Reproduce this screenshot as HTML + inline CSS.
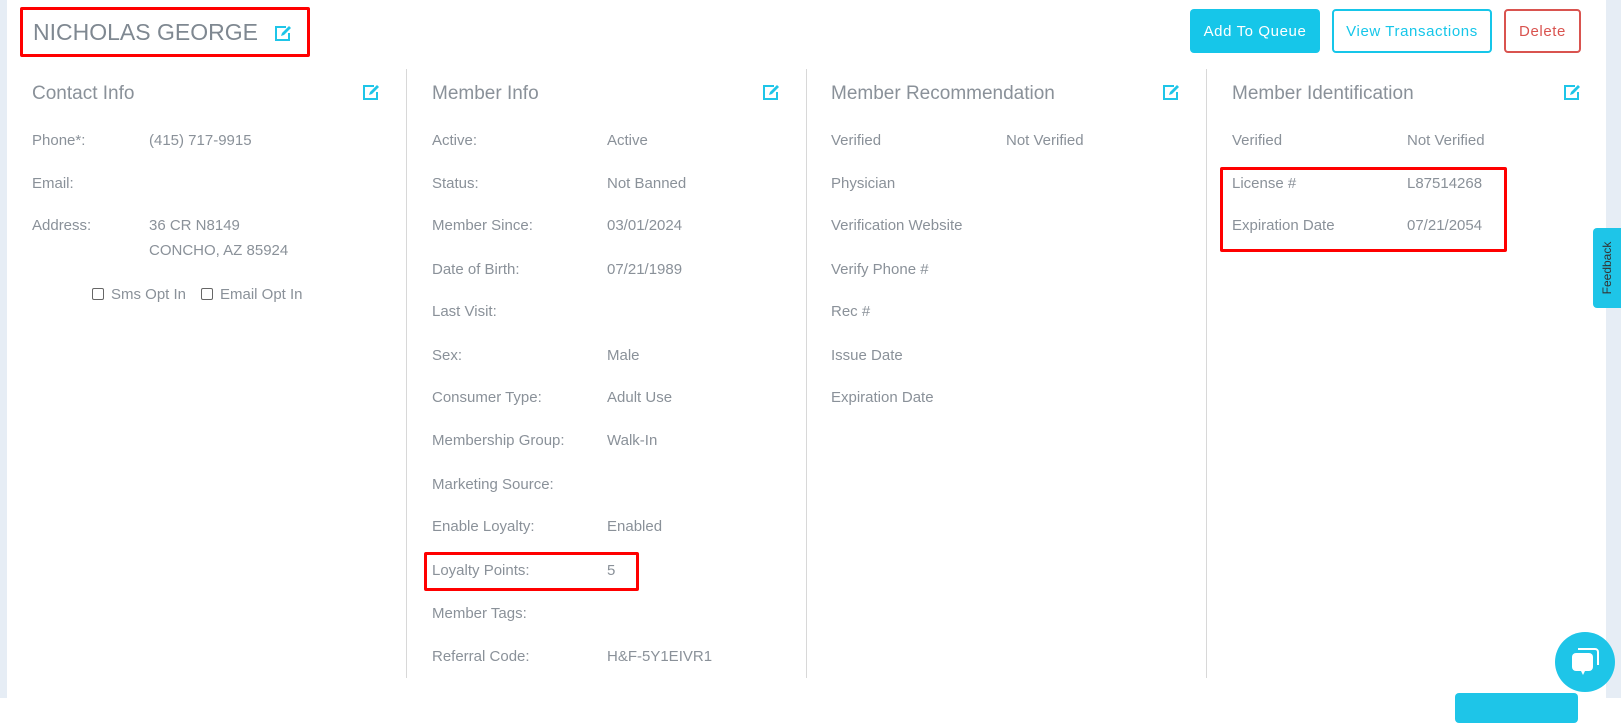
<!DOCTYPE html>
<html><head><meta charset="utf-8"><style>
*{margin:0;padding:0;box-sizing:border-box}
body{width:1621px;height:698px;overflow:hidden;background:#fff;font-family:"Liberation Sans",sans-serif;color:#8a9199;position:relative}
.abs{position:absolute}
.lstrip{left:0;top:0;width:7px;height:698px;background:#e6edf5}
.rstrip{left:1606px;top:0;width:15px;height:698px;background:#e6edf5}
.t{position:absolute;font-size:15px;white-space:nowrap;line-height:18px}
.h{position:absolute;font-size:19px;color:#8a9199;line-height:22px}
.div{position:absolute;top:69px;width:1px;height:609px;background:#d8d8d8}
.red{position:absolute;border:3px solid #f00;border-radius:2px}
.btn{position:absolute;top:9px;height:44px;border-radius:4px;font-size:15px;display:flex;align-items:center;justify-content:center;letter-spacing:.6px}
.cb{display:inline-block;width:12px;height:12px;border:1px solid #666;border-radius:2px;vertical-align:-1px;margin-right:7px}
</style></head><body>
<div class="abs lstrip"></div><div class="abs rstrip"></div>
<div class="red" style="left:20px;top:7px;width:290px;height:50px"></div>
<div class="abs" style="left:33px;top:18px;font-size:23px;line-height:28px;color:#7f8891">NICHOLAS GEORGE</div>
<svg class="abs" style="left:274px;top:25px" width="19" height="17" viewBox="0 0 19 17"><path d="M12 2H2v13h13V8" fill="none" stroke="#1ec5e8" stroke-width="2"/><path d="M7 11l1-3 7-7 2 2-7 7z" fill="#1ec5e8"/></svg>
<div class="btn" style="left:1190px;width:130px;background:#16c6e9;color:#fff">Add To Queue</div>
<div class="btn" style="left:1332px;width:160px;border:2px solid #16c6e9;color:#16c6e9">View Transactions</div>
<div class="btn" style="left:1504px;width:77px;border:2px solid #d9534f;color:#d9534f">Delete</div>

<div class="div" style="left:406px"></div><div class="div" style="left:806px"></div><div class="div" style="left:1206px"></div>

<div class="h" style="left:32px;top:83px">Contact Info</div>
<div class="h" style="left:432px;top:83px">Member Info</div>
<div class="h" style="left:831px;top:83px">Member Recommendation</div>
<div class="h" style="left:1232px;top:83px">Member Identification</div>
<svg class="abs" style="left:362px;top:84px" width="19" height="17" viewBox="0 0 19 17"><path d="M12 2H2v13h13V8" fill="none" stroke="#1ec5e8" stroke-width="2"/><path d="M7 11l1-3 7-7 2 2-7 7z" fill="#1ec5e8"/></svg>
<svg class="abs" style="left:762px;top:84px" width="19" height="17" viewBox="0 0 19 17"><path d="M12 2H2v13h13V8" fill="none" stroke="#1ec5e8" stroke-width="2"/><path d="M7 11l1-3 7-7 2 2-7 7z" fill="#1ec5e8"/></svg>
<svg class="abs" style="left:1162px;top:84px" width="19" height="17" viewBox="0 0 19 17"><path d="M12 2H2v13h13V8" fill="none" stroke="#1ec5e8" stroke-width="2"/><path d="M7 11l1-3 7-7 2 2-7 7z" fill="#1ec5e8"/></svg>
<svg class="abs" style="left:1563px;top:84px" width="19" height="17" viewBox="0 0 19 17"><path d="M12 2H2v13h13V8" fill="none" stroke="#1ec5e8" stroke-width="2"/><path d="M7 11l1-3 7-7 2 2-7 7z" fill="#1ec5e8"/></svg>

<div class="t" style="left:32px;top:132px">Phone*:</div><div class="t" style="left:149px;top:132px">(415) 717-9915</div>
<div class="t" style="left:32px;top:175px">Email:</div>
<div class="t" style="left:32px;top:217px">Address:</div><div class="t" style="left:149px;top:217px">36 CR N8149</div>
<div class="t" style="left:149px;top:242px">CONCHO, AZ 85924</div>
<div class="t" style="left:92px;top:286px"><span class="cb"></span>Sms Opt In</div>
<div class="t" style="left:201px;top:286px"><span class="cb"></span>Email Opt In</div>

<div class="t" style="left:432px;top:132px">Active:</div><div class="t" style="left:607px;top:132px">Active</div>
<div class="t" style="left:432px;top:175px">Status:</div><div class="t" style="left:607px;top:175px">Not Banned</div>
<div class="t" style="left:432px;top:217px">Member Since:</div><div class="t" style="left:607px;top:217px">03/01/2024</div>
<div class="t" style="left:432px;top:261px">Date of Birth:</div><div class="t" style="left:607px;top:261px">07/21/1989</div>
<div class="t" style="left:432px;top:303px">Last Visit:</div>
<div class="t" style="left:432px;top:347px">Sex:</div><div class="t" style="left:607px;top:347px">Male</div>
<div class="t" style="left:432px;top:389px">Consumer Type:</div><div class="t" style="left:607px;top:389px">Adult Use</div>
<div class="t" style="left:432px;top:432px">Membership Group:</div><div class="t" style="left:607px;top:432px">Walk-In</div>
<div class="t" style="left:432px;top:476px">Marketing Source:</div>
<div class="t" style="left:432px;top:518px">Enable Loyalty:</div><div class="t" style="left:607px;top:518px">Enabled</div>
<div class="red" style="left:424px;top:552px;width:215px;height:39px"></div>
<div class="t" style="left:432px;top:562px">Loyalty Points:</div><div class="t" style="left:607px;top:562px">5</div>
<div class="t" style="left:432px;top:605px">Member Tags:</div>
<div class="t" style="left:432px;top:648px">Referral Code:</div><div class="t" style="left:607px;top:648px">H&amp;F-5Y1EIVR1</div>

<div class="t" style="left:831px;top:132px">Verified</div><div class="t" style="left:1006px;top:132px">Not Verified</div>
<div class="t" style="left:831px;top:175px">Physician</div>
<div class="t" style="left:831px;top:217px">Verification Website</div>
<div class="t" style="left:831px;top:261px">Verify Phone #</div>
<div class="t" style="left:831px;top:303px">Rec #</div>
<div class="t" style="left:831px;top:347px">Issue Date</div>
<div class="t" style="left:831px;top:389px">Expiration Date</div>

<div class="t" style="left:1232px;top:132px">Verified</div><div class="t" style="left:1407px;top:132px">Not Verified</div>
<div class="red" style="left:1220px;top:167px;width:287px;height:85px"></div>
<div class="t" style="left:1232px;top:175px">License #</div><div class="t" style="left:1407px;top:175px">L87514268</div>
<div class="t" style="left:1232px;top:217px">Expiration Date</div><div class="t" style="left:1407px;top:217px">07/21/2054</div>

<div class="abs" style="left:1593px;top:228px;width:28px;height:80px;background:#1ec5e8;border-radius:4px 0 0 4px"></div>
<div class="abs" style="left:1567px;top:261px;width:80px;transform:rotate(-90deg);font-size:12px;color:#333;text-align:center">Feedback</div>

<div class="abs" style="left:1555px;top:632px;width:60px;height:60px;border-radius:50%;background:#1ec5e8"></div>
<svg class="abs" style="left:1569px;top:646px" width="32" height="32" viewBox="0 0 32 32"><path d="M9 3h17a3 3 0 013 3v13" fill="none" stroke="#fff" stroke-width="2"/><rect x="3" y="7" width="21" height="18" rx="4" fill="#fff"/><path d="M12 25l2 4 2-4z" fill="#fff"/></svg>
<div class="abs" style="left:1455px;top:693px;width:123px;height:30px;background:#1ec5e8;border-radius:4px"></div>
</body></html>
